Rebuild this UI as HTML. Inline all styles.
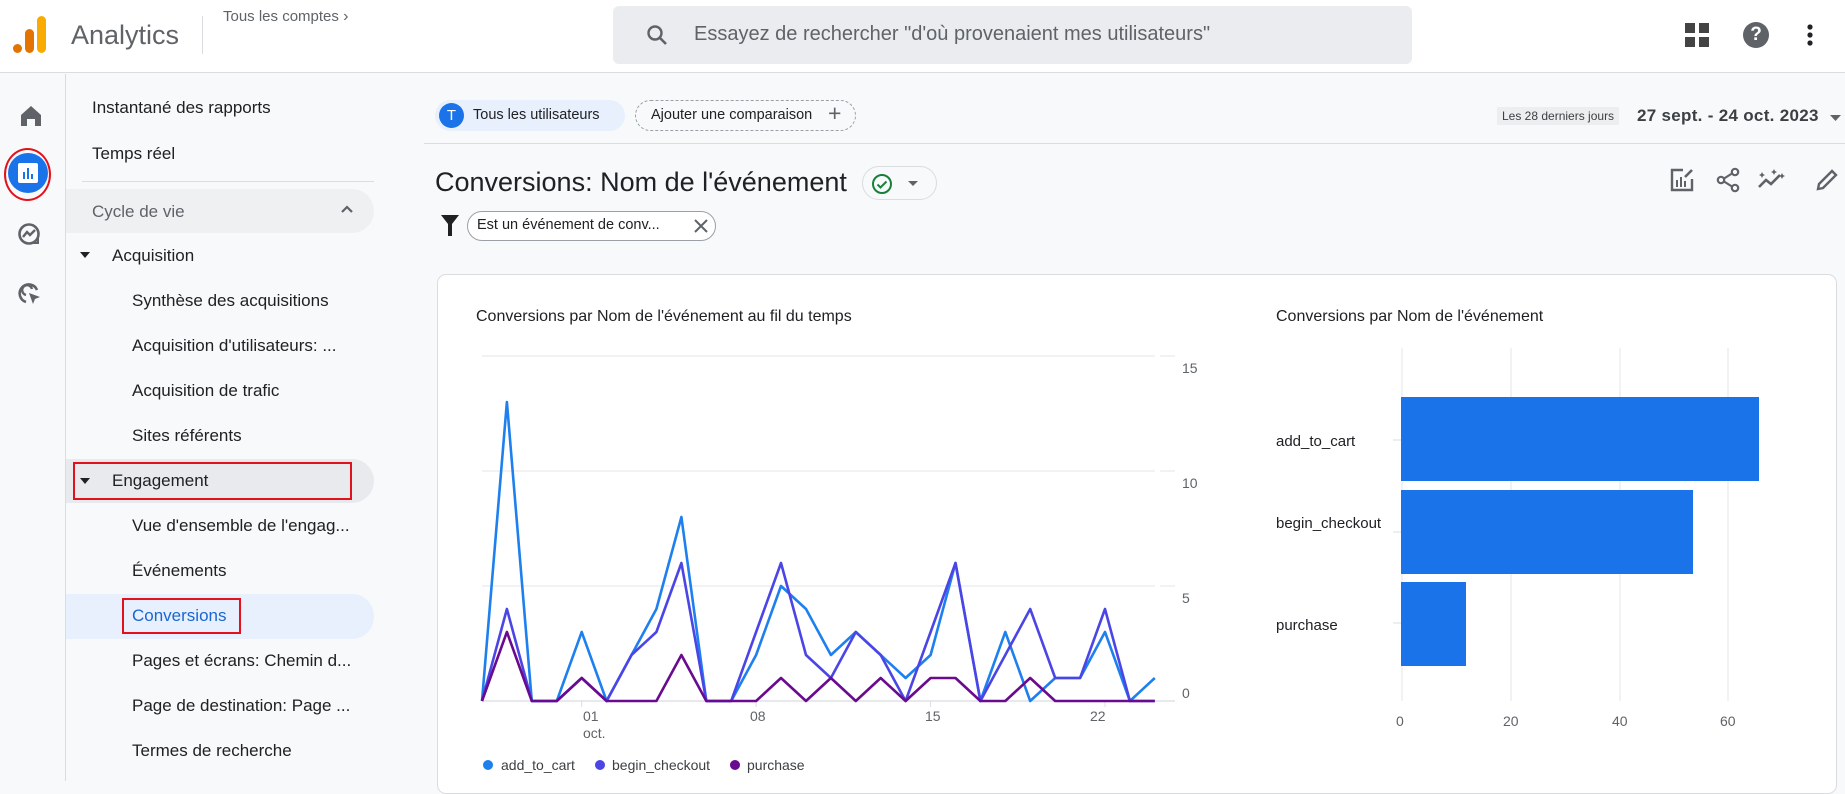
<!DOCTYPE html>
<html><head><meta charset="utf-8"><style>
*{box-sizing:border-box;margin:0;padding:0}
body{width:1845px;height:781px;overflow:hidden;background:#f8f9fa;font-family:"Liberation Sans",Arial,sans-serif;color:#202124;position:relative}
.a{position:absolute;white-space:nowrap}
.nav{font-size:17px;color:#202124}
</style></head><body>
<!-- header -->
<div class="a" style="left:0;top:0;width:1845px;height:73px;background:#fff;border-bottom:1px solid #dadce0"></div>
<svg class="a" style="left:12px;top:15px" width="36" height="40" viewBox="0 0 36 40">
<rect x="25" y="1" width="9" height="37" rx="4.5" fill="#f9ab00"/>
<rect x="13" y="14" width="9" height="24" rx="4.5" fill="#e37400"/>
<circle cx="5.5" cy="33.5" r="4.5" fill="#e37400"/></svg>
<div class="a" style="left:71px;top:20px;font-size:27px;color:#5f6368">Analytics</div>
<div class="a" style="left:202px;top:16px;width:1px;height:38px;background:#dadce0"></div>
<div class="a" style="left:223px;top:8px;font-size:15px;color:#5f6368">Tous les comptes <span style="font-size:16px">&#x203A;</span></div>
<div class="a" style="left:613px;top:6px;width:799px;height:58px;background:#eaecef;border-radius:6px"></div>
<svg class="a" style="left:645px;top:23px" width="24" height="24" viewBox="0 0 24 24"><circle cx="10" cy="10" r="6.5" fill="none" stroke="#5f6368" stroke-width="2.4"/><path d="M15 15l6 6" stroke="#5f6368" stroke-width="2.6"/></svg>
<div class="a" style="left:694px;top:23px;font-size:20px;color:#5f6368">Essayez de rechercher "d'où provenaient mes utilisateurs"</div>
<svg class="a" style="left:1685px;top:23px" width="24" height="24"><rect x="0" y="0" width="10" height="10" fill="#444"/><rect x="14" y="0" width="10" height="10" fill="#444"/><rect x="0" y="14" width="10" height="10" fill="#444"/><rect x="14" y="14" width="10" height="10" fill="#444"/></svg>
<div class="a" style="left:1743px;top:22px;width:26px;height:26px;border-radius:50%;background:#5f6368;color:#fff;font-weight:bold;font-size:19px;text-align:center;line-height:26px">?</div>
<svg class="a" style="left:1807px;top:24px" width="6" height="22"><circle cx="3" cy="3" r="2.6" fill="#202124"/><circle cx="3" cy="11" r="2.6" fill="#202124"/><circle cx="3" cy="19" r="2.6" fill="#202124"/></svg>

<!-- left rail -->
<div class="a" style="left:65px;top:74px;width:1px;height:707px;background:#dadce0"></div>
<svg class="a" style="left:19px;top:104px" width="24" height="24" viewBox="0 0 24 24"><path d="M2 11L12 2l10 9v11h-6v-7H8v7H2z" fill="#5f6368"/></svg>
<div class="a" style="left:4px;top:148px;width:47px;height:53px;border:2px solid #e3111b;border-radius:50%"></div>
<div class="a" style="left:8px;top:153px;width:40px;height:40px;border-radius:50%;background:#1a73e8"></div>
<svg class="a" style="left:18px;top:163px" width="20" height="20"><rect x="0" y="0" width="20" height="20" rx="2" fill="#fff"/><rect x="5" y="9" width="2" height="7" fill="#1a73e8"/><rect x="9" y="5" width="2" height="11" fill="#1a73e8"/><rect x="13" y="11" width="2" height="5" fill="#1a73e8"/></svg>
<svg class="a" style="left:17px;top:222px" width="26" height="26" viewBox="0 0 26 26"><circle cx="12" cy="12" r="9.5" fill="none" stroke="#5f6368" stroke-width="2.6"/><path d="M6 15l4-5 3 3 5-5" fill="none" stroke="#5f6368" stroke-width="2.4"/><path d="M15 21l6 0 0-6" fill="none" stroke="#5f6368" stroke-width="2"/></svg>
<svg class="a" style="left:17px;top:281px" width="26" height="26" viewBox="0 0 26 26"><path d="M20 9A9 9 0 1 0 9 21" fill="none" stroke="#5f6368" stroke-width="2.6"/><path d="M15 8a5 5 0 1 0-6 6" fill="none" stroke="#5f6368" stroke-width="2.4"/><path d="M12 12l11 4-5 2-2 5z" fill="#5f6368"/></svg>

<!-- nav -->
<div class="a nav" style="left:92px;top:98px">Instantané des rapports</div>
<div class="a nav" style="left:92px;top:144px">Temps réel</div>
<div class="a" style="left:82px;top:181px;width:292px;height:1px;background:#dadce0"></div>
<div class="a" style="left:66px;top:189px;width:308px;height:44px;background:#eef0f2;border-radius:0 22px 22px 0"></div>
<div class="a nav" style="left:92px;top:202px;color:#5f6368">Cycle de vie</div>
<svg class="a" style="left:340px;top:204px" width="14" height="10"><path d="M2 8l5-5 5 5" fill="none" stroke="#5f6368" stroke-width="2.2"/></svg>
<svg class="a" style="left:80px;top:252px" width="10" height="6"><path d="M0 0h10L5 6z" fill="#202124"/></svg>
<div class="a nav" style="left:112px;top:246px">Acquisition</div>
<div class="a nav" style="left:132px;top:291px">Synthèse des acquisitions</div>
<div class="a nav" style="left:132px;top:336px">Acquisition d'utilisateurs: ...</div>
<div class="a nav" style="left:132px;top:381px">Acquisition de trafic</div>
<div class="a nav" style="left:132px;top:426px">Sites référents</div>
<div class="a" style="left:66px;top:459px;width:308px;height:44px;background:#e8eaed;border-radius:0 22px 22px 0"></div>
<div class="a" style="left:73px;top:462px;width:279px;height:38px;border:2px solid #e3111b"></div>
<svg class="a" style="left:80px;top:478px" width="10" height="6"><path d="M0 0h10L5 6z" fill="#202124"/></svg>
<div class="a nav" style="left:112px;top:471px">Engagement</div>
<div class="a nav" style="left:132px;top:516px">Vue d'ensemble de l'engag...</div>
<div class="a nav" style="left:132px;top:561px">Événements</div>
<div class="a" style="left:66px;top:594px;width:308px;height:45px;background:#e8f0fe;border-radius:0 22px 22px 0"></div>
<div class="a" style="left:122px;top:598px;width:119px;height:36px;border:2px solid #e3111b"></div>
<div class="a nav" style="left:132px;top:606px;color:#1967d2">Conversions</div>
<div class="a nav" style="left:132px;top:651px">Pages et écrans: Chemin d...</div>
<div class="a nav" style="left:132px;top:696px">Page de destination: Page ...</div>
<div class="a nav" style="left:132px;top:741px">Termes de recherche</div>

<!-- top controls -->
<div class="a" style="left:435px;top:100px;width:190px;height:31px;background:#e8f0fe;border-radius:16px"></div>
<div class="a" style="left:439px;top:103px;width:25px;height:25px;border-radius:50%;background:#1a73e8;color:#fff;font-size:15px;text-align:center;line-height:25px">T</div>
<div class="a" style="left:473px;top:107px;font-size:14.5px;color:#202124">Tous les utilisateurs</div>
<div class="a" style="left:635px;top:100px;width:221px;height:31px;border:1px dashed #9aa0a6;border-radius:16px"></div>
<div class="a" style="left:651px;top:107px;font-size:14.5px;color:#202124">Ajouter une comparaison</div>
<div class="a" style="left:828px;top:100px;font-size:23px;color:#5f6368">+</div>
<div class="a" style="left:1497px;top:107px;padding:2px 5px;background:#eceef0;font-size:12px;color:#3c4043">Les 28 derniers jours</div>
<div class="a" style="left:1637px;top:106px;font-size:17px;font-weight:bold;color:#3c4043;letter-spacing:0.3px">27 sept. - 24 oct. 2023</div>
<svg class="a" style="left:1830px;top:115px" width="11" height="6"><path d="M0 0h11L5.5 6z" fill="#5f6368"/></svg>
<div class="a" style="left:424px;top:143px;width:1421px;height:1px;background:#dadce0"></div>

<div class="a" style="left:435px;top:167px;font-size:27px;color:#202124">Conversions: Nom de l'événement</div>
<div class="a" style="left:862px;top:166px;width:75px;height:34px;border:1px solid #dadce0;border-radius:17px"></div>
<svg class="a" style="left:871px;top:173px" width="22" height="22"><circle cx="11" cy="11" r="9" fill="none" stroke="#188038" stroke-width="2"/><path d="M6.5 11.5l3 3 6-6" fill="none" stroke="#188038" stroke-width="2"/></svg>
<svg class="a" style="left:908px;top:181px" width="10" height="5"><path d="M0 0h10L5 5z" fill="#5f6368"/></svg>
<svg class="a" style="left:440px;top:213px" width="20" height="26"><path d="M1 2h18l-7 9v12h-4V11z" fill="#202124"/></svg>
<div class="a" style="left:467px;top:211px;width:249px;height:30px;border:1px solid #9aa0a6;border-radius:15px;background:#fff"></div>
<div class="a" style="left:477px;top:217px;font-size:14.5px;color:#202124">Est un événement de conv...</div>
<svg class="a" style="left:694px;top:219px" width="14" height="14"><path d="M1 1l12 12M13 1L1 13" stroke="#5f6368" stroke-width="2"/></svg>

<!-- right icons -->
<svg class="a" style="left:1669px;top:167px" width="26" height="26" viewBox="0 0 26 26"><path d="M14 3H3v20h20V12" fill="none" stroke="#5f6368" stroke-width="2.4"/><rect x="7" y="13" width="2" height="7" fill="#5f6368"/><rect x="11" y="10" width="2" height="10" fill="#5f6368"/><rect x="15" y="14" width="2" height="6" fill="#5f6368"/><path d="M16 10l7-7" stroke="#5f6368" stroke-width="2.6"/></svg>
<svg class="a" style="left:1716px;top:167px" width="24" height="26" viewBox="0 0 24 26"><circle cx="19" cy="5" r="3.2" fill="none" stroke="#5f6368" stroke-width="2.2"/><circle cx="5" cy="13" r="3.2" fill="none" stroke="#5f6368" stroke-width="2.2"/><circle cx="19" cy="21" r="3.2" fill="none" stroke="#5f6368" stroke-width="2.2"/><path d="M8 11.5l8-5M8 14.5l8 5" stroke="#5f6368" stroke-width="2.2"/></svg>
<svg class="a" style="left:1757px;top:167px" width="30" height="24" viewBox="0 0 30 24"><path d="M2 20l7-7 5 4 9-9" fill="none" stroke="#5f6368" stroke-width="2.6"/><path d="M5 5l1 2 2 1-2 1-1 2-1-2-2-1 2-1zM17 2l1 2 2 1-2 1-1 2-1-2-2-1 2-1zM25 6l1 2 2 1-2 1-1 2-1-2-2-1 2-1z" fill="#5f6368"/></svg>
<svg class="a" style="left:1814px;top:167px" width="26" height="26" viewBox="0 0 26 26"><path d="M4 22l1-5L18 4l4 4L9 21z" fill="none" stroke="#5f6368" stroke-width="2.4"/></svg>

<!-- card -->
<div class="a" style="left:437px;top:274px;width:1400px;height:520px;background:#fff;border:1px solid #dadce0;border-radius:9px"></div>
<div class="a" style="left:476px;top:308px;font-size:16px;color:#202124">Conversions par Nom de l'événement au fil du temps</div>
<svg class="a" style="left:0;top:0" width="1845" height="781">
<g stroke="#e8eaed" stroke-width="1.2">
<line x1="482" y1="356" x2="1155" y2="356"/><line x1="482" y1="471" x2="1155" y2="471"/><line x1="482" y1="586" x2="1155" y2="586"/>
<line x1="1160" y1="356" x2="1175" y2="356"/><line x1="1160" y1="471" x2="1175" y2="471"/><line x1="1160" y1="586" x2="1175" y2="586"/>
<line x1="1402" y1="348" x2="1402" y2="701"/><line x1="1511" y1="348" x2="1511" y2="701"/><line x1="1620" y1="348" x2="1620" y2="701"/><line x1="1728" y1="348" x2="1728" y2="701"/>
</g>
<line x1="482" y1="701" x2="1175" y2="701" stroke="#dadce0" stroke-width="1.2"/>
<g stroke="#dadce0"><line x1="581.7" y1="701" x2="581.7" y2="707"/><line x1="756.1" y1="701" x2="756.1" y2="707"/><line x1="930.6" y1="701" x2="930.6" y2="707"/><line x1="1105" y1="701" x2="1105" y2="707"/>
<line x1="1393" y1="440" x2="1401" y2="440"/><line x1="1393" y1="532" x2="1401" y2="532"/><line x1="1393" y1="623" x2="1401" y2="623"/></g>
<g fill="none" stroke-width="2.6" stroke-linejoin="round">
<polyline stroke="#1e80ee" points="482,701 506.9,402 531.8,701 556.8,701 581.7,632 606.6,701 631.5,655 656.4,609 681.4,517 706.3,701 731.2,701 756.1,655 781,586 806,609 830.9,655 855.8,632 880.7,655 905.6,678 930.6,655 955.5,563 980.4,701 1005.3,632 1030.2,701 1055.2,678 1080.1,678 1105,632 1129.9,701 1154.8,678"/>
<polyline stroke="#4c45e6" points="482,701 506.9,609 531.8,701 556.8,701 581.7,678 606.6,701 631.5,655 656.4,632 681.4,563 706.3,701 731.2,701 756.1,632 781,563 806,655 830.9,678 855.8,632 880.7,655 905.6,701 930.6,632 955.5,563 980.4,701 1005.3,655 1030.2,609 1055.2,678 1080.1,678 1105,609 1129.9,701 1154.8,701"/>
<polyline stroke="#6a0a8f" points="482,701 506.9,632 531.8,701 556.8,701 581.7,678 606.6,701 631.5,701 656.4,701 681.4,655 706.3,701 731.2,701 756.1,701 781,678 806,701 830.9,678 855.8,701 880.7,678 905.6,701 930.6,678 955.5,678 980.4,701 1005.3,701 1030.2,678 1055.2,701 1080.1,701 1105,701 1129.9,701 1154.8,701"/>
</g>
<g font-family="Liberation Sans, sans-serif" font-size="14" fill="#5f6368">
<text x="1182" y="373">15</text><text x="1182" y="488">10</text><text x="1182" y="603">5</text><text x="1182" y="698">0</text>
<text x="583" y="721">01</text><text x="583" y="738">oct.</text><text x="750" y="721">08</text><text x="925" y="721">15</text><text x="1090" y="721">22</text>
<text x="1396" y="726">0</text><text x="1503" y="726">20</text><text x="1612" y="726">40</text><text x="1720" y="726">60</text>
</g>
<g font-family="Liberation Sans, sans-serif" font-size="14" fill="#3c4043">
<circle cx="488" cy="765" r="5" fill="#1e80ee"/><text x="501" y="770">add_to_cart</text>
<circle cx="600" cy="765" r="5" fill="#4c45e6"/><text x="612" y="770">begin_checkout</text>
<circle cx="735" cy="765" r="5" fill="#6a0a8f"/><text x="747" y="770">purchase</text>
</g>
<g fill="#1a73e8"><rect x="1401" y="397" width="358" height="84"/><rect x="1401" y="490" width="292" height="84"/><rect x="1401" y="582" width="65" height="84"/></g>
<g font-family="Liberation Sans, sans-serif" font-size="15" fill="#202124">
<text x="1276" y="446">add_to_cart</text><text x="1276" y="528">begin_checkout</text><text x="1276" y="630">purchase</text>
</g>
</svg>
<div class="a" style="left:1276px;top:308px;font-size:16px;color:#202124">Conversions par Nom de l'événement</div>
</body></html>
